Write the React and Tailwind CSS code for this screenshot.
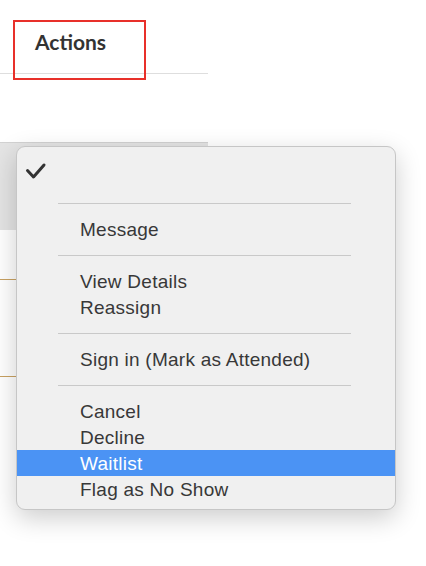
import React from 'react';

const sans = { fontFamily: '"Liberation Sans", Arial, sans-serif' };

const groups = [
  ['Message'],
  ['View Details', 'Reassign'],
  ['Sign in (Mark as Attended)'],
  ['Cancel', 'Decline', 'Waitlist', 'Flag as No Show'],
];

const Separator = () => (
  <div className="h-[26px] flex items-center">
    <div className="ml-[41px] w-[293px] h-px bg-[#c9c9c9]" />
  </div>
);

const MenuItem = ({ label, active }) => (
  <div
    className={
      active
        ? 'h-[26px] leading-[28px] pl-[63px] text-[19px] tracking-[0.25px] bg-[#4b93f4] text-white'
        : 'h-[26px] leading-[28px] pl-[63px] text-[19px] tracking-[0.25px] text-[#383838]'
    }
  >
    {label}
  </div>
);

export default function App() {
  return (
    <div className="relative w-[426px] h-[566px] bg-white overflow-hidden">
      {/* Column header */}
      <div className="w-[208px] h-[74px] border-b border-[#dedede] pl-[35px] pt-[30px]">
        <span className="text-[21px] leading-[24px] font-bold text-[#333]" style={{ fontFamily: 'Lato, sans-serif' }}>
          Actions
        </span>
      </div>
      <div className="absolute left-[13px] top-[20px] w-[133px] h-[60px] border-2 border-[#e8302a]" />

      {/* Table rows behind the menu */}
      <div className="mt-[68px] w-[208px] h-[88px] bg-[#e4e4e4] border-t border-[#d2d2d2]" />
      <div className="w-[208px] h-[50px] border-b border-[#c9a262]" />
      <div className="w-[208px] h-[97px] border-b border-[#c9a262]" />

      {/* Context menu */}
      <div
        className="absolute left-[16px] top-[146px] w-[380px] rounded-[9px] bg-[#f0f0f0] border border-[#c6c6c6] pt-[7px] pb-[7px] shadow-[0_8px_26px_rgba(0,0,0,0.2)]"
        style={sans}
      >
        <div className="h-[36px]">
          <svg width="40" height="36" viewBox="0 0 40 36">
            <path d="M10.5 16.5 L16.5 23 L27 11" fill="none" stroke="#333" strokeWidth="3" strokeLinecap="round" strokeLinejoin="round" />
          </svg>
        </div>
        {groups.map((items, i) => (
          <div key={i}>
            <Separator />
            {items.map((label) => (
              <MenuItem key={label} label={label} active={label === 'Waitlist'} />
            ))}
          </div>
        ))}
      </div>
    </div>
  );
}
